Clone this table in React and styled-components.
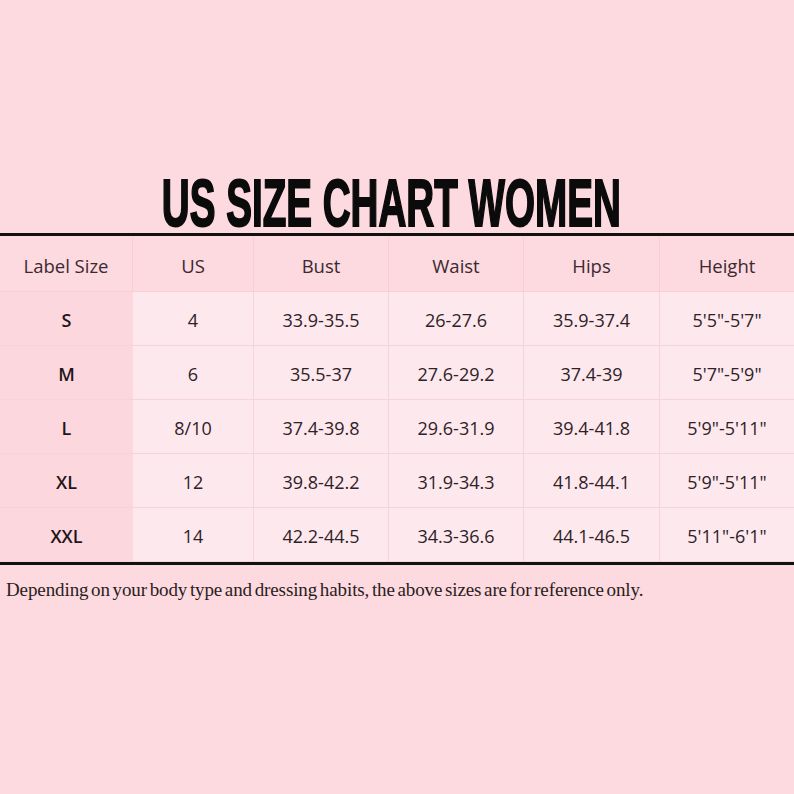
import React from "react";
import styled, { createGlobalStyle } from "styled-components";

const rows = [
    { label: "S", us: "4", bust: "33.9-35.5", waist: "26-27.6", hips: "35.9-37.4", height: "5'5\"-5'7\"" },
    { label: "M", us: "6", bust: "35.5-37", waist: "27.6-29.2", hips: "37.4-39", height: "5'7\"-5'9\"" },
    { label: "L", us: "8/10", bust: "37.4-39.8", waist: "29.6-31.9", hips: "39.4-41.8", height: "5'9\"-5'11\"" },
    { label: "XL", us: "12", bust: "39.8-42.2", waist: "31.9-34.3", hips: "41.8-44.1", height: "5'9\"-5'11\"" },
    { label: "XXL", us: "14", bust: "42.2-44.5", waist: "34.3-36.6", hips: "44.1-46.5", height: "5'11\"-6'1\"" },
];

const headers = ["Label Size", "US", "Bust", "Waist", "Hips", "Height"];

const App = () => {
    return (
        <React.Fragment>
            <GlobalStyle />
            <Page>
                <TitleBox>
                    <Title>US SIZE CHART WOMEN</Title>
                </TitleBox>
                <Chart>
                    {headers.map(h => (
                        <HeadCell key={h}>{h}</HeadCell>
                    ))}
                    {rows.map(r => (
                        <React.Fragment key={r.label}>
                            <LabelCell>{r.label}</LabelCell>
                            <Cell>{r.us}</Cell>
                            <Cell>{r.bust}</Cell>
                            <Cell>{r.waist}</Cell>
                            <Cell>{r.hips}</Cell>
                            <Cell>{r.height}</Cell>
                        </React.Fragment>
                    ))}
                </Chart>
                <Note>
                    Depending on your body type and dressing habits, the above
                    sizes are for reference only.
                </Note>
            </Page>
        </React.Fragment>
    );
};

const GlobalStyle = createGlobalStyle`
    html, body {
        margin: 0;
        padding: 0;
        background: #fdd9e0;
    }
`;

// whole canvas
const Page = styled.div`
    width: 794px;
    height: 794px;
    background: #fdd9e0;
    padding-top: 170px;
    box-sizing: border-box;
    overflow: hidden;
`;

const TitleBox = styled.div`
    display: flex;
    justify-content: center;
    padding-right: 12px;
    height: 63px;
`;

// condensed heavy heading
const Title = styled.h1`
    margin: 0;
    font-family: "Liberation Sans", Arial, sans-serif;
    font-weight: 700;
    font-size: 66px;
    line-height: 66px;
    color: #0b0b0b;
    white-space: nowrap;
    transform: scaleX(0.585);
    -webkit-text-stroke: 2px #0b0b0b;
`;

const Chart = styled.div`
    display: grid;
    grid-template-columns: 133px 121px 135px 135px 136px 134px;
    grid-template-rows: 56px repeat(5, 54px);
    border-top: 3px solid #111;
    border-bottom: 3px solid #111;
    font-family: "Open Sans", "Noto Sans", sans-serif;
`;

const Cell = styled.div`
    display: flex;
    align-items: center;
    justify-content: center;
    padding-top: 2px;
    box-sizing: border-box;
    background: #fde8ee;
    border-right: 1px solid #f6d3da;
    border-bottom: 1px solid #f6d3da;
    font-size: 18px;
    color: #2e2226;
    &:nth-child(6n) {
        border-right: none;
    }
`;

const HeadCell = styled(Cell)`
    background: #fdd9e0;
    border-right: 1px solid #f7d0d7;
    border-bottom: 1px solid #f7d0d7;
    padding-top: 4px;
    font-size: 18.5px;
    color: #3a2a2f;
`;

const LabelCell = styled(Cell)`
    background: #fdd7de;
    font-weight: 600;
    color: #1f1619;
    border-right: none;
`;

const Note = styled.p`
    margin: 14px 0 0 6px;
    font-family: "Liberation Serif", "Times New Roman", serif;
    font-size: 19px;
    color: #2a1d20;
    word-spacing: -2px;
    letter-spacing: -0.1px;
`;

export default App;
